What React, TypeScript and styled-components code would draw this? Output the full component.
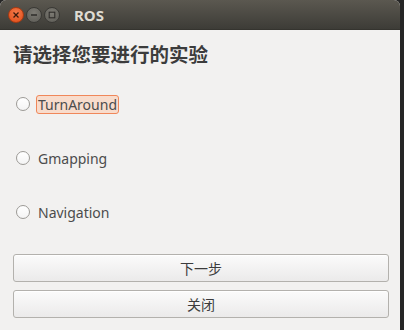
import styled, { createGlobalStyle } from "styled-components";

const Global = createGlobalStyle`
  html, body {
    margin: 0;
    padding: 0;
    background: #2b2b2b;
  }
  body {
    font-family: Ubuntu, "Noto Sans", "Noto Sans CJK SC", sans-serif;
  }
`;

const Screen = styled.div`
  width: 404px;
  height: 330px;
  display: flex;
  background: #262626;
  overflow: hidden;
`;

const Window = styled.div`
  width: 400px;
  height: 330px;
  display: flex;
  flex-direction: column;
  background: #f2f1f0;
  border-top-left-radius: 6px;
  border-top-right-radius: 6px;
  overflow: hidden;
`;

const TitleBar = styled.div`
  height: 29px;
  flex: none;
  display: flex;
  align-items: center;
  padding-left: 8px;
  gap: 2px;
  background: linear-gradient(#5b5850, #3d3c37);
  border-bottom: 1px solid #35342f;
`;

const WinButton = styled.div<{ $close?: boolean }>`
  width: 16px;
  height: 16px;
  border-radius: 50%;
  display: flex;
  align-items: center;
  justify-content: center;
  box-sizing: border-box;
  background: ${(p) =>
    p.$close
      ? "radial-gradient(circle at 50% 35%, #f47a4a, #df4b16)"
      : "radial-gradient(circle at 50% 35%, #7d7b74, #5b5a54)"};
  border: 1px solid ${(p) => (p.$close ? "#a83a12" : "#3a3935")};
`;

const Title = styled.span`
  margin-left: 12px;
  font-family: "Noto Sans", "DejaVu Sans", sans-serif;
  font-weight: bold;
  font-size: 15px;
  color: #dfdbd2;
`;

const Body = styled.div`
  flex: 1;
  display: flex;
  flex-direction: column;
  padding: 11px 12px 0 13px;
`;

const Heading = styled.h1`
  margin: 0;
  font-family: "Noto Sans CJK SC", sans-serif;
  font-size: 19.5px;
  font-weight: bold;
  color: #3c3c3c;
  line-height: 26px;
`;

const Options = styled.div`
  display: flex;
  flex-direction: column;
  gap: 34px;
  margin-top: 27px;
  padding-left: 3px;
`;

const Option = styled.label`
  display: flex;
  align-items: center;
  height: 20px;
  gap: 9px;
`;

const RadioDot = styled.span`
  width: 14px;
  height: 14px;
  border-radius: 50%;
  box-sizing: border-box;
  border: 1px solid #9c9a96;
  background: linear-gradient(#ffffff, #f4f4f4);
  flex: none;
`;

const OptionText = styled.span<{ $focus?: boolean }>`
  font-family: "Noto Sans", "DejaVu Sans", sans-serif;
  font-size: 14px;
  color: #4c4c4c;
  padding: 0 1px;
  margin-left: -3px;
  line-height: 17px;
  border-radius: 3px;
  border: 1px solid ${(p) => (p.$focus ? "#f0875a" : "transparent")};
  background: ${(p) => (p.$focus ? "#f8dccc" : "transparent")};
`;

const Buttons = styled.div`
  display: flex;
  flex-direction: column;
  gap: 8px;
  margin-top: 32px;
`;

const Button = styled.button`
  height: 28px;
  width: 376px;
  border: 1px solid #b3b1ad;
  border-radius: 3px;
  background: linear-gradient(#fbfbfb, #ebeaea);
  box-shadow: inset 0 1px 0 #ffffff;
  font-family: "Noto Sans CJK SC", sans-serif;
  font-size: 14px;
  color: #3c3c3c;
  padding: 0;
`;

export default function App() {
  return (
    <>
      <Global />
      <Screen>
        <Window>
          <TitleBar>
            <WinButton $close>
              <svg width="8" height="8" viewBox="0 0 8 8">
                <path d="M1.5 1.5 L6.5 6.5 M6.5 1.5 L1.5 6.5" stroke="#3a1a0c" strokeWidth="1.3" />
              </svg>
            </WinButton>
            <WinButton>
              <svg width="8" height="8" viewBox="0 0 8 8">
                <path d="M1 4 H7" stroke="#2e2d2a" strokeWidth="1.3" />
              </svg>
            </WinButton>
            <WinButton>
              <svg width="8" height="8" viewBox="0 0 8 8">
                <rect x="1.2" y="1.2" width="5.6" height="5.6" fill="none" stroke="#2e2d2a" strokeWidth="1.1" />
              </svg>
            </WinButton>
            <Title>ROS</Title>
          </TitleBar>
          <Body>
            <Heading>请选择您要进行的实验</Heading>
            <Options>
              <Option>
                <RadioDot />
                <OptionText $focus>TurnAround</OptionText>
              </Option>
              <Option>
                <RadioDot />
                <OptionText>Gmapping</OptionText>
              </Option>
              <Option>
                <RadioDot />
                <OptionText>Navigation</OptionText>
              </Option>
            </Options>
            <Buttons>
              <Button>下一步</Button>
              <Button>关闭</Button>
            </Buttons>
          </Body>
        </Window>
      </Screen>
    </>
  );
}
